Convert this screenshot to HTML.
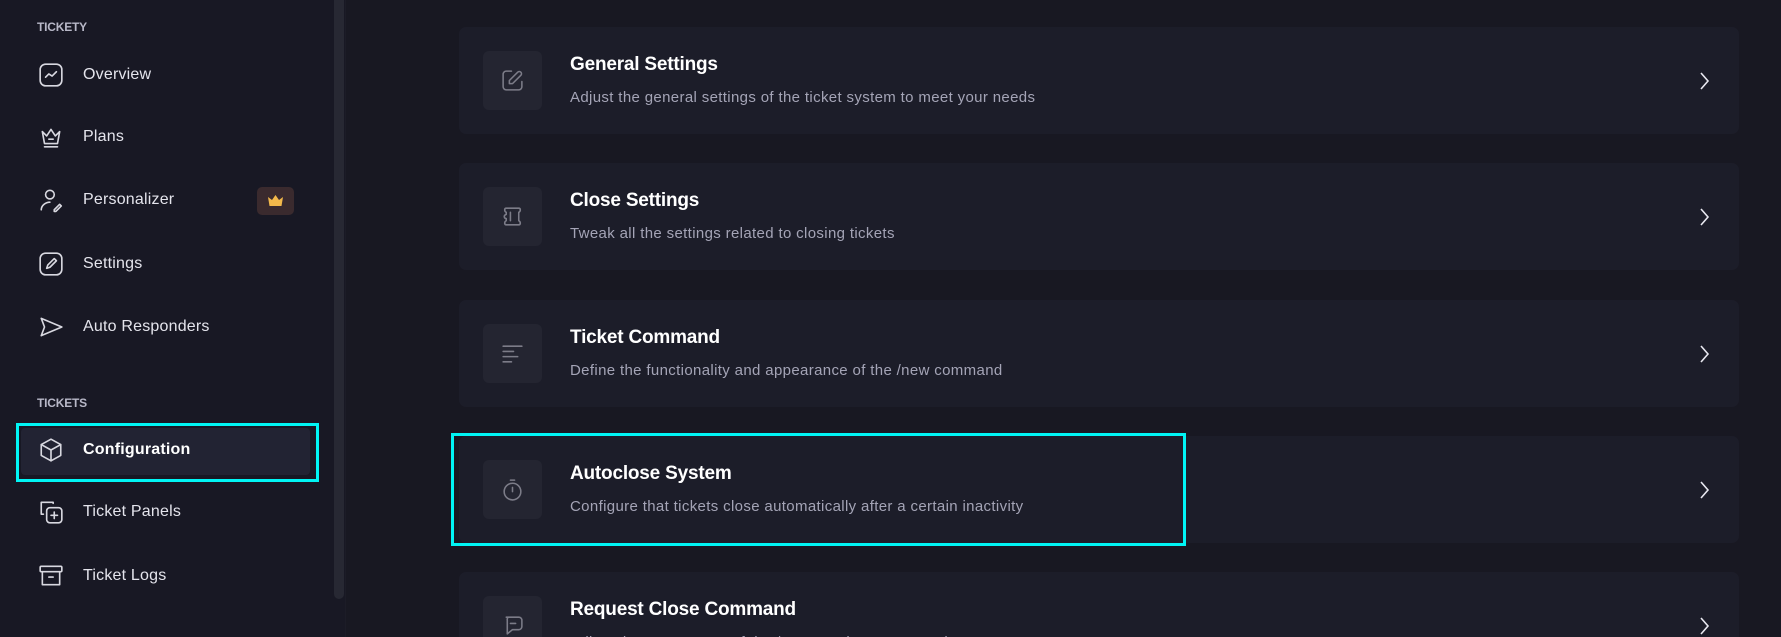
<!DOCTYPE html>
<html><head><meta charset="utf-8"><style>
*{margin:0;padding:0;box-sizing:border-box}
html,body{width:1781px;height:637px;overflow:hidden}
body{background:#181822;font-family:"Liberation Sans",sans-serif;color:#fff}
#w{position:relative;width:1781px;height:637px;overflow:hidden}
.sb{position:absolute;left:0;top:0;width:346px;height:637px;background:#181824;border-right:1px solid #1c1c27}
.scroll{position:absolute;left:334px;top:0;width:10px;height:599px;background:#272833;border-radius:0 0 5px 5px}
.lbl{position:absolute;left:37px;font-size:12px;font-weight:bold;color:#b8b8c8;letter-spacing:-.2px}
.it{position:absolute;left:38px;height:28px;display:flex;align-items:center;font-size:16px;color:#e4e4ec;letter-spacing:.2px}
.it svg{width:26px;height:26px;margin-right:19px;fill:none;stroke:#d8d8e0;stroke-width:1.5;stroke-linecap:round;stroke-linejoin:round}
.hl{position:absolute;left:16px;top:423px;width:303px;height:59px;border:3px solid #00f5f5}
.hl div{position:absolute;left:2px;top:2px;right:6px;bottom:4px;background:#222333;border-radius:4px}
.badge{position:absolute;left:257px;top:187px;width:37px;height:28px;background:#3a2a2e;border-radius:5px}
.card{position:absolute;left:459px;width:1280px;height:107px;background:#1c1d29;border-radius:7px;overflow:hidden}
.ib{position:absolute;left:24px;top:24px;width:59px;height:59px;background:#242531;border-radius:6px}
.ib svg{position:absolute;left:17px;top:17px;width:25px;height:25px;fill:none;stroke:#7c7c88;stroke-width:1.5;stroke-linecap:round;stroke-linejoin:round}
.t{position:absolute;left:111px;top:27px;font-size:19px;font-weight:bold;color:#fff;letter-spacing:-.2px}
.d{position:absolute;left:111px;top:62px;font-size:15px;color:#a4a4b6;letter-spacing:.35px}
.ch{position:absolute;left:1240px;top:45px;width:12px;height:18px}
.box{position:absolute;left:451px;top:433px;width:735px;height:113px;border:3px solid #00f5f5}
</style></head><body><div id="w">
<div class="sb"></div>
<div class="scroll"></div>
<div class="lbl" style="top:20px">TICKETY</div>
<div class="it" style="top:61px"><svg viewBox="0 0 24 24"><rect x="2" y="2" width="20" height="20" rx="5"/><path d="M7 14l3-3 3 2 4-4"/></svg>Overview</div>
<div class="it" style="top:123px"><svg viewBox="0 0 24 24"><path d="M4 7l4 4 4-6 4 6 4-4-2 11H6z"/><path d="M6 21h12M10 14h4"/></svg>Plans</div>
<div class="it" style="top:186px"><svg viewBox="0 0 24 24"><circle cx="11" cy="7" r="4"/><path d="M3 21c0-4 4-7 8-7M15 21l5-5 1.5 1.5-5 5H15z"/></svg>Personalizer</div>
<div class="badge"><svg width="37" height="28" viewBox="0 0 37 28"><path d="M11 10l4 3 3.5-5 3.5 5 4-3-1.5 9h-12z" fill="#f2b84b"/></svg></div>
<div class="it" style="top:250px"><svg viewBox="0 0 24 24"><rect x="2" y="2" width="20" height="20" rx="5"/><path d="M8 16l1-3 6-6 2 2-6 6z"/></svg>Settings</div>
<div class="it" style="top:313px"><svg viewBox="0 0 24 24"><path d="M3 4l19 8-19 8 3-8z"/></svg>Auto Responders</div>
<div class="lbl" style="top:396px">TICKETS</div>
<div class="hl"><div></div></div>
<div class="it" style="top:436px;color:#fff;font-weight:bold"><svg viewBox="0 0 24 24"><path d="M12 2l9 5v10l-9 5-9-5V7z"/><path d="M3 7l9 5 9-5M12 12v10"/></svg>Configuration</div>
<div class="it" style="top:498px"><svg viewBox="0 0 24 24"><path d="M14 4V3H3v11h2"/><rect x="8" y="8" width="14" height="14" rx="3"/><path d="M15 12v6M12 15h6"/></svg>Ticket Panels</div>
<div class="it" style="top:562px"><svg viewBox="0 0 24 24"><rect x="2" y="3" width="20" height="5" rx="1"/><path d="M4 8v12h16V8M10 13h4"/></svg>Ticket Logs</div>

<div class="card" style="top:27px"><div class="ib"><svg viewBox="0 0 24 24"><path d="M11 3H6a3 3 0 0 0-3 3v12a3 3 0 0 0 3 3h12a3 3 0 0 0 3-3v-5"/><path d="M9 15v-3l8-8a2 2 0 0 1 3 3l-8 8z"/></svg></div><div class="t">General Settings</div><div class="d">Adjust the general settings of the ticket system to meet your needs</div><svg class="ch" viewBox="0 0 12 18"><path d="M2 1l7 8-7 8" fill="none" stroke="#e8e8f0" stroke-width="1.6"/></svg></div>
<div class="card" style="top:163px"><div class="ib"><svg viewBox="0 0 24 24"><path d="M6 4h12c2 0 2 3 0 4v8c2 1 2 4 0 4H6c-2 0-2-3 0-4v-2c-2 0-3-3 0-4V8C4 7 4 4 6 4z"/><path d="M10 8v8"/></svg></div><div class="t">Close Settings</div><div class="d">Tweak all the settings related to closing tickets</div><svg class="ch" viewBox="0 0 12 18"><path d="M2 1l7 8-7 8" fill="none" stroke="#e8e8f0" stroke-width="1.6"/></svg></div>
<div class="card" style="top:300px"><div class="ib"><svg viewBox="0 0 24 24"><path d="M3 5h18M3 10h10M3 15h14M3 20h8"/></svg></div><div class="t">Ticket Command</div><div class="d">Define the functionality and appearance of the /new command</div><svg class="ch" viewBox="0 0 12 18"><path d="M2 1l7 8-7 8" fill="none" stroke="#e8e8f0" stroke-width="1.6"/></svg></div>
<div class="card" style="top:436px"><div class="ib"><svg viewBox="0 0 24 24"><circle cx="12" cy="14" r="8"/><path d="M10 3h4M12 10v4"/></svg></div><div class="t">Autoclose System</div><div class="d">Configure that tickets close automatically after a certain inactivity</div><svg class="ch" viewBox="0 0 12 18"><path d="M2 1l7 8-7 8" fill="none" stroke="#e8e8f0" stroke-width="1.6"/></svg></div>
<div class="card" style="top:572px;height:65px;border-radius:7px 7px 0 0"><div class="ib"><svg viewBox="0 0 24 24"><path d="M6 4h12a3 3 0 0 1 3 3v6a3 3 0 0 1-3 3h-6l-5 4V7a3 3 0 0 1 1-3z"/><path d="M10 10h5"/></svg></div><div class="t">Request Close Command</div><div class="d">Adjust the appearance of the /request-close command</div><svg class="ch" viewBox="0 0 12 18"><path d="M2 1l7 8-7 8" fill="none" stroke="#e8e8f0" stroke-width="1.6"/></svg></div>
<div class="box"></div>
</div></body></html>
